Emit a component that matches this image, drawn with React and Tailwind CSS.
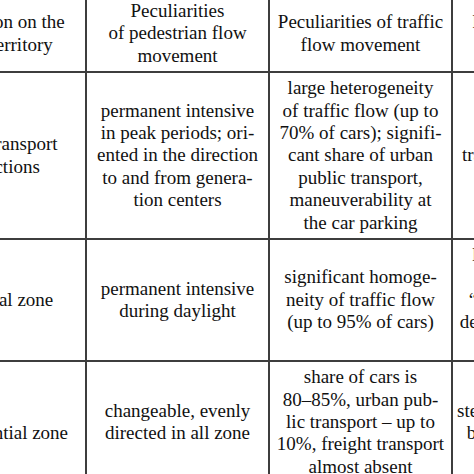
const rows = [
  {
    h: "h-[75px]",
    cells: [
      ["Location on the", "city territory"],
      ["Peculiarities", "of pedestrian flow", "movement"],
      ["Peculiarities of traffic", "flow movement"],
      ["Peculiarities of the", "parking"],
    ],
  },
  {
    h: "h-[166px]",
    cells: [
      ["near transport", "junctions"],
      ["permanent intensive", "in peak periods; ori-", "ented in the direction", "to and from genera-", "tion centers"],
      ["large heterogeneity", "of traffic flow (up to", "70% of cars); signifi-", "cant share of urban", "public transport,", "maneuverability at", "the car parking"],
      ["high parking", "transit traffic prevails", "in peak hours"],
    ],
  },
  {
    h: "h-[119px]",
    cells: [
      ["Central zone"],
      ["permanent intensive", "during daylight"],
      ["significant homoge-", "neity of traffic flow", "(up to 95% of cars)"],
      ["long-term parking,", "mainly", "“park and ride” lots", "demand for parking is", "high"],
    ],
  },
  {
    h: "h-[122px]",
    cells: [
      ["\u00a0", "Residential zone"],
      ["changeable, evenly", "directed in all zone"],
      ["share of cars is", "80–85%, urban pub-", "lic transport – up to", "10%, freight transport", "almost absent"],
      ["constant", "steady parking demand", "by residents at night", "in yards"],
    ],
  },
];

const Cell = ({ lines }) => (
  <td className="border-2 border-[#3d3d3d] px-1 py-1 text-center align-middle whitespace-nowrap">
    {lines.map((l, i) => (
      <div key={i}>{l}</div>
    ))}
  </td>
);

export default function App() {
  return (
    <div className="w-[474px] h-[474px] overflow-hidden bg-white">
      <table className="table-fixed border-collapse w-[709px] ml-[-77px] mt-[-6px] font-['Liberation_Serif',_serif] text-[19px] leading-[22.4px] text-[#111]">
        <colgroup>
          <col className="w-[162px]" />
          <col className="w-[183px]" />
          <col className="w-[183px]" />
          <col className="w-[183px]" />
        </colgroup>
        <tbody>
          {rows.map((r, i) => (
            <tr key={i} className={r.h}>
              {r.cells.map((c, j) => (
                <Cell key={j} lines={c} />
              ))}
            </tr>
          ))}
        </tbody>
      </table>
    </div>
  );
}
